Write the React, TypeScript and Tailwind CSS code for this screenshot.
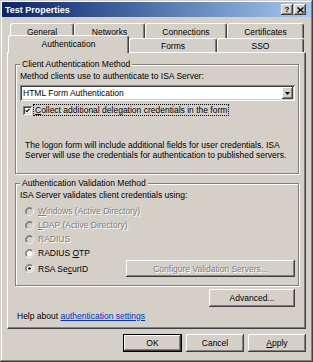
import type { ReactNode } from 'react';

const raised =
  'shadow-[inset_-1px_-1px_#404040,inset_1px_1px_#ffffff,inset_-2px_-2px_#808080,inset_2px_2px_#d4d0c8]';
const sunken =
  'shadow-[inset_1px_1px_#808080,inset_-1px_-1px_#ffffff,inset_2px_2px_#404040,inset_-2px_-2px_#d4d0c8]';
const disabledText = 'text-[#808080] [text-shadow:1px_1px_0_#ffffff]';

function Tab({ label, className = '' }: { label: string; className?: string }) {
  return (
    <div
      className={`flex h-[15px] items-center justify-center rounded-t-[3px] border border-b-0 border-t-white border-l-white border-r-[#404040] bg-[#d4d0c8] pt-[1px] shadow-[inset_-1px_0_#808080] ${className}`}
    >
      {label}
    </div>
  );
}

function Radio({ checked, disabled }: { checked?: boolean; disabled?: boolean }) {
  return (
    <svg width="9" height="9" viewBox="0 0 12 12" className="shrink-0">
      <circle cx="6" cy="6" r="4.2" fill={disabled ? '#d4d0c8' : '#ffffff'} />
      <path d="M2.11 9.89 A5.5 5.5 0 0 1 9.89 2.11" stroke="#808080" strokeWidth="1" fill="none" />
      <path d="M9.89 2.11 A5.5 5.5 0 0 1 2.11 9.89" stroke="#ffffff" strokeWidth="1" fill="none" />
      <path d="M2.82 9.18 A4.5 4.5 0 0 1 9.18 2.82" stroke="#404040" strokeWidth="1" fill="none" />
      <path d="M9.18 2.82 A4.5 4.5 0 0 1 2.82 9.18" stroke="#d4d0c8" strokeWidth="1" fill="none" />
      {checked && <circle cx="6" cy="6" r="1.8" fill="#000000" />}
    </svg>
  );
}

function RadioRow({
  children,
  checked,
  disabled,
}: {
  children: ReactNode;
  checked?: boolean;
  disabled?: boolean;
}) {
  return (
    <div className="flex h-[14px] items-center pl-[5px]">
      <Radio checked={checked} disabled={disabled} />
      <span className={`ml-[4px] ${disabled ? disabledText : ''}`}>{children}</span>
    </div>
  );
}

export default function App() {
  return (
    <div className="flex h-[362px] w-[313px] flex-col bg-[#d4d0c8] p-[2px] font-['Liberation_Sans',Arial,sans-serif] text-[8.5px] leading-[10px] text-black shadow-[inset_-1px_-1px_#404040,inset_1px_1px_#d4d0c8,inset_-2px_-2px_#808080,inset_2px_2px_#ffffff]">
      {/* title bar */}
      <div className="flex h-[15px] shrink-0 items-center bg-linear-to-r from-[#0a246a] to-[#a6caf0] pl-[3px] pr-[5px]">
        <span className="text-[9px] font-bold text-white">Test Properties</span>
        <div className="ml-auto flex gap-[1px]">
          <div className={`flex h-[11px] w-[12px] items-center justify-center bg-[#d4d0c8] text-[8px] font-bold leading-none ${raised}`}>
            ?
          </div>
          <div className={`flex h-[11px] w-[12px] items-center justify-center bg-[#d4d0c8] ${raised}`}>
            <svg width="7" height="6" viewBox="0 0 7 6">
              <path d="M0.5 0.5 L6.5 5.5 M6.5 0.5 L0.5 5.5" stroke="#000" strokeWidth="1.4" />
            </svg>
          </div>
        </div>
      </div>

      <div className="mx-[5px] mt-[6px] flex flex-col">
        {/* tabs */}
        <div className="ml-[3px] flex">
          <Tab label="General" className="w-[64px]" />
          <Tab label="Networks" className="w-[71px]" />
          <Tab label="Connections" className="w-[82px]" />
          <Tab label="Certificates" className="w-[77px]" />
        </div>
        <div className="ml-[1px] flex h-[14px] items-end">
          <div className="relative z-10 mb-[-1px] flex h-[18px] w-[121px] items-center justify-center rounded-t-[3px] border border-b-0 border-t-white border-l-white border-r-[#404040] bg-[#d4d0c8] pb-[2px] shadow-[inset_-1px_0_#808080]">
            Authentication
          </div>
          <div className="flex h-[14px] w-[88px] items-center justify-center rounded-t-[3px] border border-b-0 border-t-white border-l-white border-r-[#404040] bg-[#d4d0c8] pt-[1px] shadow-[inset_-1px_0_#808080]">
            Forms
          </div>
          <div className="flex h-[14px] w-[87px] items-center justify-center rounded-t-[3px] border border-b-0 border-t-white border-l-white border-r-[#404040] bg-[#d4d0c8] pt-[1px] shadow-[inset_-1px_0_#808080]">
            SSO
          </div>
        </div>

        {/* panel */}
        <div className="flex h-[277px] flex-col border border-t-white border-l-white border-r-[#404040] border-b-[#404040] pl-[7px] pt-[6px] shadow-[inset_-1px_-1px_#808080]">
          <fieldset className="h-[115px] w-[284px] border border-[#808080] pl-[4px] pr-[3px] shadow-[inset_1px_1px_#ffffff,1px_1px_#ffffff]">
            <legend className="bg-[#d4d0c8] px-[2px]">Client Authentication Method</legend>
            <div className="mt-[2px]">Method clients use to authenticate to ISA Server:</div>
            <div className={`mt-[4px] flex h-[16px] items-center bg-white p-[2px] ${sunken}`}>
              <span className="pl-[1px]">HTML Form Authentication</span>
              <div className={`ml-auto flex h-[12px] w-[11px] items-center justify-center bg-[#d4d0c8] ${raised}`}>
                <svg width="5" height="3" viewBox="0 0 5 3">
                  <path d="M0 0 H5 L2.5 3 Z" fill="#000" />
                </svg>
              </div>
            </div>
            <div className="mt-[3px] flex h-[12px] items-center pl-[3px]">
              <div className={`flex h-[9px] w-[9px] shrink-0 items-center justify-center bg-white ${sunken}`}>
                <svg width="5" height="5" viewBox="0 0 7 7">
                  <path d="M0.8 3.2 L2.8 5.2 L6.2 1.2" stroke="#000" strokeWidth="1.6" fill="none" />
                </svg>
              </div>
              <span className="ml-[1px] border border-dotted border-black px-[1px] leading-[10px]">
                <span className="underline">C</span>ollect additional delegation credentials in the form
              </span>
            </div>
            <div className="mt-[24px] pl-[5px]">
              The logon form will include additional fields for user credentials. ISA
              <br />
              Server will use the credentials for authentication to published servers.
            </div>
          </fieldset>

          <fieldset className="mt-[4px] h-[108px] w-[284px] border border-[#808080] pl-[4px] pr-[3px] shadow-[inset_1px_1px_#ffffff,1px_1px_#ffffff]">
            <legend className="bg-[#d4d0c8] px-[2px]">Authentication Validation Method</legend>
            <div className="mt-[2px]">ISA Server validates client credentials using:</div>
            <div className="mt-[4px] flex flex-col">
              <RadioRow disabled>
                <span className="underline">W</span>indows (Active Directory)
              </RadioRow>
              <RadioRow disabled>
                <span className="underline">L</span>DAP (Active Directory)
              </RadioRow>
              <RadioRow disabled>RADIUS</RadioRow>
              <RadioRow>
                RADIUS <span className="underline">O</span>TP
              </RadioRow>
              <div className="flex h-[17px] items-center pl-[5px]">
                <Radio checked />
                <span className="ml-[4px]">
                  RSA Se<span className="underline">c</span>urID
                </span>
                <div
                  className={`ml-auto flex h-[17px] w-[169px] items-center justify-center bg-[#d4d0c8] ${raised} ${disabledText}`}
                >
                  Configure Validation Servers...
                </div>
              </div>
            </div>
          </fieldset>

          <div className="mt-[3px] flex w-[284px] justify-end pr-[4px]">
            <div className={`flex h-[18px] w-[86px] items-center justify-center bg-[#d4d0c8] ${raised}`}>
              Advanced...
            </div>
          </div>

          <div className="mt-[4px] pl-[2px]">
            Help about <span className="text-[#0033cc] underline">authentication settings</span>
          </div>
        </div>

        {/* dialog buttons */}
        <div className="mt-[5px] flex justify-end gap-[4px]">
          <div className="h-[18px] w-[59px] border border-black">
            <div className={`flex h-full w-full items-center justify-center bg-[#d4d0c8] ${raised}`}>OK</div>
          </div>
          <div className={`flex h-[18px] w-[58px] items-center justify-center bg-[#d4d0c8] ${raised}`}>
            Cancel
          </div>
          <div className={`flex h-[18px] w-[58px] items-center justify-center bg-[#d4d0c8] ${raised}`}>
            <span>
              <span className="underline">A</span>pply
            </span>
          </div>
        </div>
      </div>
    </div>
  );
}
